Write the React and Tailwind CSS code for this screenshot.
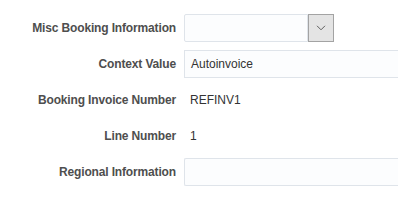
export default function App() {
  const label = "w-[176px] shrink-0 text-right font-bold text-[12px] tracking-[-0.15px] text-[#4e4e4e]";
  return (
    <div className="w-[398px] h-[209px] bg-white overflow-hidden font-['Liberation_Sans',Arial,sans-serif]">
      <div className="flex flex-col gap-2 pt-[14px]">
        <div className="flex items-center h-[28px] gap-2">
          <div className={label}>Misc Booking Information</div>
          <div className="flex h-[28px]">
            <div className="w-[124px] h-[28px] border border-[#dfe4ea] bg-[#fcfdfe] rounded-l-[2px]"></div>
            <div className="w-[26px] h-[28px] border border-[#a3a3a3] bg-[#e4e4e4] flex items-center justify-center">
              <svg width="10" height="6" viewBox="0 0 10 6">
                <path d="M1 0.8 L5 4.8 L9 0.8" fill="none" stroke="#5e5e5e" strokeWidth="1" />
              </svg>
            </div>
          </div>
        </div>
        <div className="flex items-center h-[28px] gap-2">
          <div className={label}>Context Value</div>
          <div className="flex-1 h-[28px] border border-[#dfe4ea] border-r-0 bg-[#fcfdfe] flex items-center pl-[6px] text-[12px] text-[#333333]">Autoinvoice</div>
        </div>
        <div className="flex items-center h-[28px] gap-2">
          <div className={label}>Booking Invoice Number</div>
          <div className="pl-[6px] text-[12px] text-[#333333]">REFINV1</div>
        </div>
        <div className="flex items-center h-[28px] gap-2">
          <div className={label}>Line Number</div>
          <div className="pl-[6px] text-[12px] text-[#333333]">1</div>
        </div>
        <div className="flex items-center h-[28px] gap-2">
          <div className={label}>Regional Information</div>
          <div className="flex-1 h-[28px] border border-[#dfe4ea] border-r-0 bg-[#fcfdfe] rounded-l-[2px]"></div>
        </div>
      </div>
    </div>
  );
}
